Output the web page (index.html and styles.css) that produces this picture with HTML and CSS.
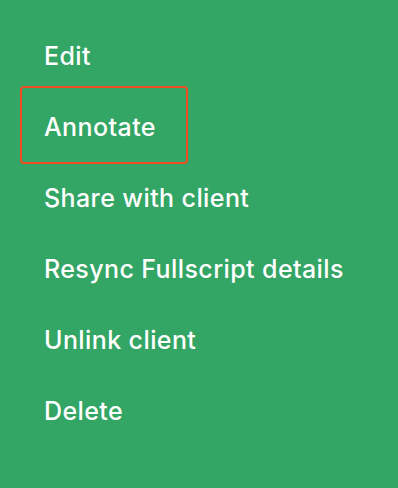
FILE: index.html
```html
<!DOCTYPE html>
<html>
<head>
<meta charset="utf-8">
<link rel="stylesheet" href="styles.css">
</head>
<body>
<ul class="menu">
  <li class="item">Edit</li>
  <li class="item focused">Annotate</li>
  <li class="item">Share with client</li>
  <li class="item">Resync Fullscript details</li>
  <li class="item">Unlink client</li>
  <li class="item">Delete</li>
</ul>
</body>
</html>
```
FILE: styles.css
```css
html, body {
  margin: 0;
  padding: 0;
  background: #33a564;
  height: 100%;
}
body {
  font-family: Inter, "Noto Sans", sans-serif;
  font-size: 25px;
  font-weight: 500;
  letter-spacing: 0.4px;
  color: #ffffff;
}
.menu {
  list-style: none;
  margin: 0;
  padding: 21px 0 0 44px;
}
.item {
  position: relative;
  line-height: 71px;
  height: 71px;
}
.focused::after {
  content: "";
  position: absolute;
  left: -24px;
  top: -6px;
  width: 168px;
  height: 78px;
  box-sizing: border-box;
  border: 2px solid #f24b24;
  border-radius: 4px;
}
```
